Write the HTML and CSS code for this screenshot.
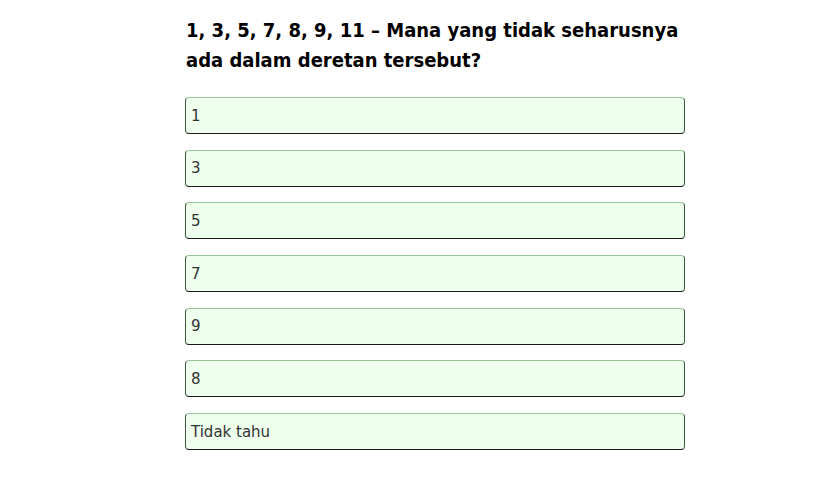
FILE: index.html
```html
<!DOCTYPE html>
<html lang="id">

<head>
  <meta charset="UTF-8">
  <meta name="viewport" content="width=device-width, initial-scale=1.0">
  <title>Kuis deret</title>
  <link rel="stylesheet" href="styles.css">
</head>

<body>
  <main class="quiz">
    <h1 class="question">1, 3, 5, 7, 8, 9, 11 – Mana yang tidak seharusnya ada dalam deretan tersebut?</h1>
    <div class="answers">
      <button class="answer">1</button>
      <button class="answer">3</button>
      <button class="answer">5</button>
      <button class="answer">7</button>
      <button class="answer">9</button>
      <button class="answer">8</button>
      <button class="answer">Tidak tahu</button>
    </div>
  </main>
</body>

</html>
```

FILE: styles.css
```css
body {
  margin: 0;
  background: #fff;
  font-family: "DejaVu Sans", Verdana, sans-serif;
}

.quiz {
  width: 500px;
  padding: 15px 0 0 185px;
}

.question {
  margin: 0 0 22px 1px;
  font-family: "DejaVu Sans Condensed", "DejaVu Sans", sans-serif;
  font-size: 20px;
  font-weight: bold;
  line-height: 30px;
  color: #000;
}

.answers {
  display: flex;
  flex-direction: column;
  gap: 15.7px;
}

.answer {
  display: block;
  width: 500px;
  height: 37px;
  padding: 0 0 0 5px;
  text-align: left;
  font-family: "DejaVu Sans", Verdana, sans-serif;
  font-size: 15px;
  color: #333;
  background: #eeffee;
  border: 1px solid;
  border-color: #99c499 #3a5a3a #1a1a1a #3a5a3a;
  border-radius: 4px;
}
```
